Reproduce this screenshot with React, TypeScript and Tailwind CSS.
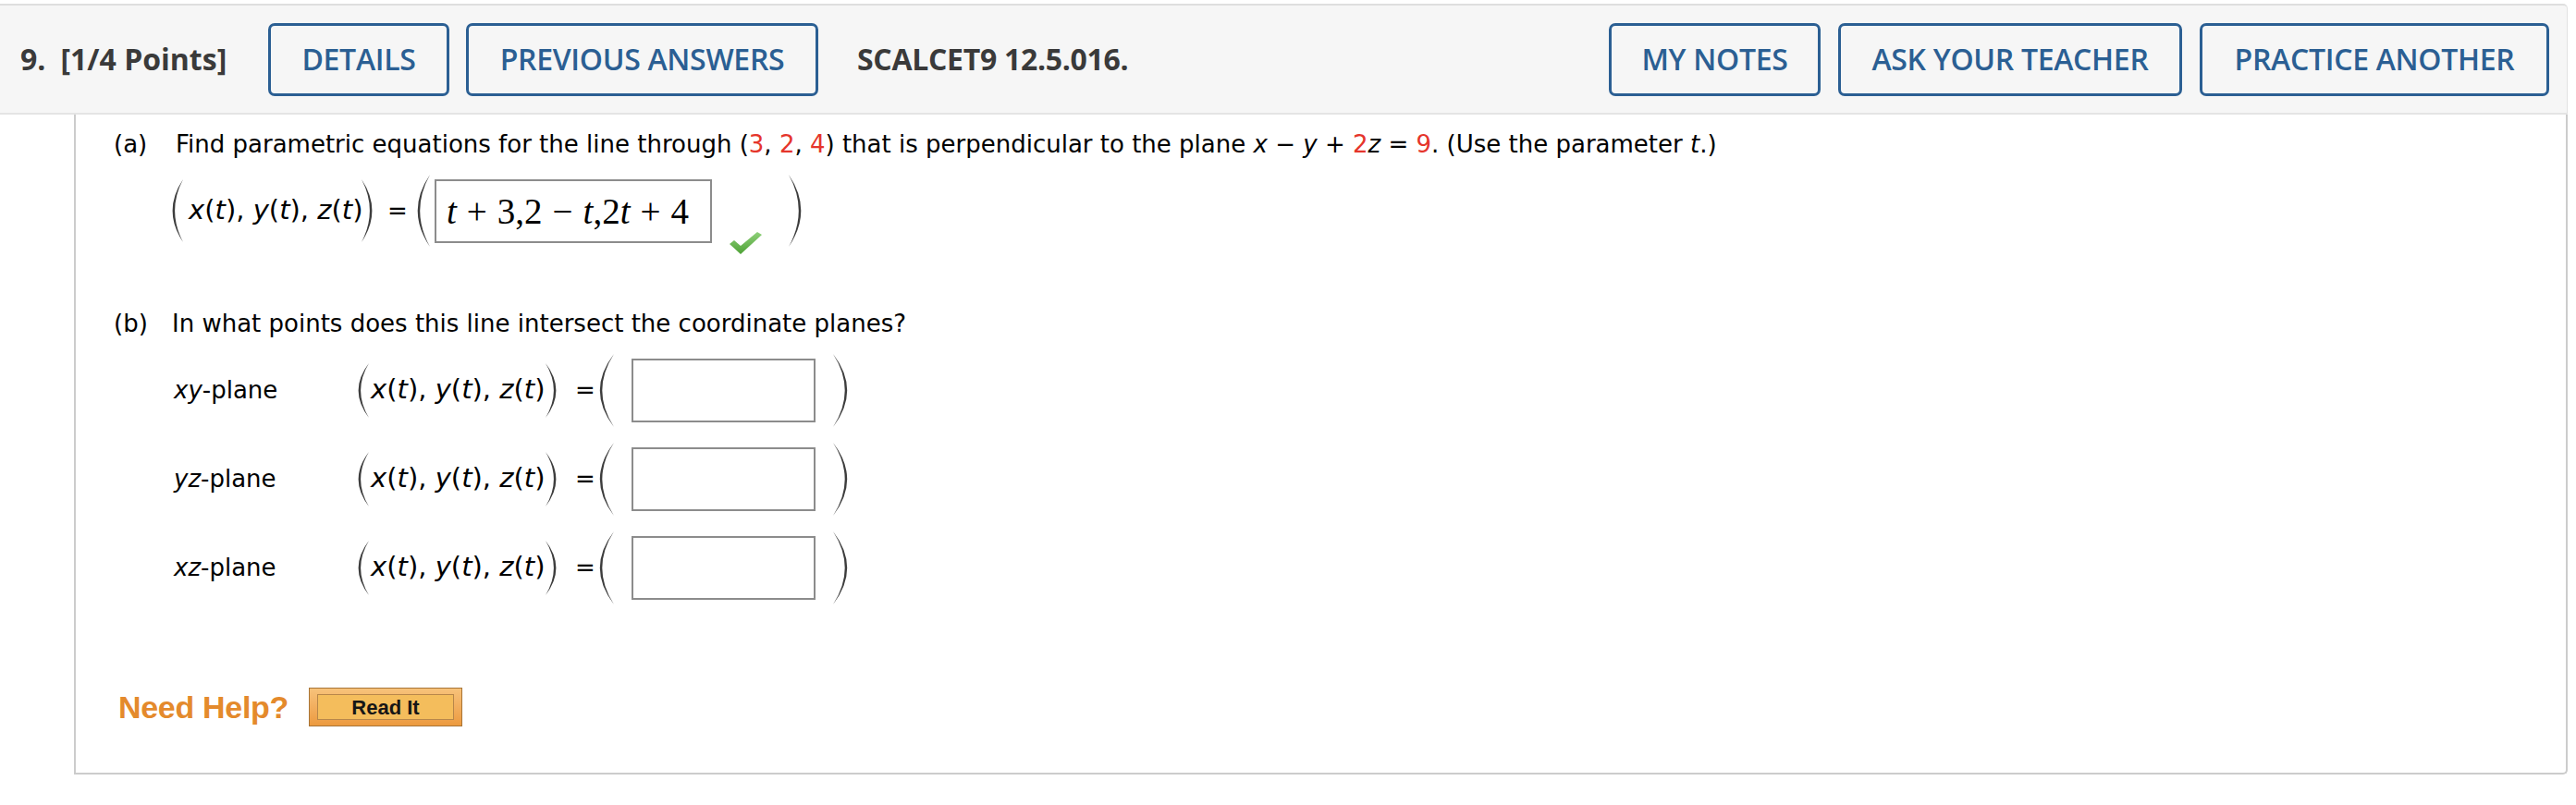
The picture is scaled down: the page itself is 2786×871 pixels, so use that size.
import type { ReactNode } from "react";

// stretchy math paren, tapered at the ends like MathJax's
function Paren({ side, w, h }: { side: "l" | "r"; w: number; h: number }) {
  const o = -w * 0.9;
  const i = o + 5;
  const left = `M${w} 0 Q${o} ${h / 2} ${w} ${h} Q${i} ${h / 2} ${w} 0 Z`;
  const right = `M0 0 Q${w - o} ${h / 2} 0 ${h} Q${w - i} ${h / 2} 0 0 Z`;
  return (
    <svg width={w} height={h} viewBox={`0 0 ${w} ${h}`} className="shrink-0">
      <path d={side === "l" ? left : right} fill="#3d3d3d" />
    </svg>
  );
}

function HeaderButton({ width, children }: { width: string; children: ReactNode }) {
  return (
    <button
      className={`flex h-[79px] shrink-0 items-center justify-center rounded-[7px] border-[3px] border-[#2b5f93] text-[32px] font-semibold tracking-[-0.3px] text-[#2b5f93] ${width}`}
    >
      {children}
    </button>
  );
}

function Xyz() {
  return (
    <span className="whitespace-nowrap text-[29px]">
      <i>x</i>(<i>t</i>), <i>y</i>(<i>t</i>), <i>z</i>(<i>t</i>)
    </span>
  );
}

function Red({ children }: { children: ReactNode }) {
  return <span className="text-[#e5352b]">{children}</span>;
}

function Check() {
  return (
    <svg width="36" height="24" viewBox="0 0 36 24" className="shrink-0">
      <defs>
        <linearGradient id="chk" x1="0" y1="0" x2="0" y2="1">
          <stop offset="0" stopColor="#8fd07a" />
          <stop offset="1" stopColor="#4ea236" />
        </linearGradient>
      </defs>
      <path d="M0 13 L5 9 L12 15 L30 0 L35 3 L12 24 Z" fill="url(#chk)" />
    </svg>
  );
}

function PlaneRow({ label }: { label: ReactNode }) {
  return (
    <div className="mt-[16px] flex h-[80px] items-center pl-[106px]">
      <span className="w-[199px] shrink-0">{label}</span>
      <Paren side="l" w={12} h={59} />
      <span className="ml-[2px] w-[189px] shrink-0">
        <Xyz />
      </span>
      <Paren side="r" w={12} h={59} />
      <span className="ml-[20px] w-[18px] shrink-0">=</span>
      <span className="ml-[8px]">
        <Paren side="l" w={16} h={79} />
      </span>
      <div className="ml-[19px] h-[69px] w-[199px] shrink-0 border-2 border-[#8c8c8c] bg-white" />
      <span className="ml-[19px]">
        <Paren side="r" w={16} h={79} />
      </span>
    </div>
  );
}

export default function App() {
  return (
    <div className="h-[871px] w-[2786px] bg-white pt-[4px] font-['DejaVu_Sans',sans-serif] text-black">
      <header className="flex h-[120px] w-[2777px] items-center rounded-tr-[5px] border-t-2 border-r border-b-2 border-t-[#dedede] border-r-[#e2e2e2] border-b-[#e4e4e4] bg-[#f6f6f6] pl-[22px] pr-[19px] font-['Open_Sans',sans-serif]">
        <span className="w-[268px] shrink-0 text-[32px] font-bold text-[#3a3a3a]">
          9.<span className="ml-[16px]">[1/4 Points]</span>
        </span>
        <HeaderButton width="w-[196px]">DETAILS</HeaderButton>
        <div className="ml-[18px]">
          <HeaderButton width="w-[381px]">PREVIOUS ANSWERS</HeaderButton>
        </div>
        <span className="ml-[42px] text-[32px] font-bold tracking-[-0.3px] text-[#3a3a3a]">
          SCALCET9 12.5.016.
        </span>
        <div className="ml-auto flex gap-[19px]">
          <HeaderButton width="w-[229px]">MY NOTES</HeaderButton>
          <HeaderButton width="w-[372px]">ASK YOUR TEACHER</HeaderButton>
          <HeaderButton width="w-[378px]">PRACTICE ANOTHER</HeaderButton>
        </div>
      </header>

      <section className="ml-[80px] h-[714px] w-[2697px] rounded-br-[5px] border-r-2 border-b-2 border-l-2 border-[#cccccc] pt-[16px] text-[26px]">
        {/* (a) */}
        <div className="flex h-[32px] items-center pl-[41px] leading-[32px]">
          <span className="w-[67px] shrink-0">(a)</span>
          <span className="whitespace-nowrap">
            Find parametric equations for the line through (<Red>3</Red>, <Red>2</Red>, <Red>4</Red>) that is
            perpendicular to the plane <i>x</i> − <i>y</i> + <Red>2</Red>
            <i>z</i> = <Red>9</Red>. (Use the parameter <i>t</i>.)
          </span>
        </div>

        <div className="mt-[16px] flex h-[80px] items-center pl-[104px]">
          <Paren side="l" w={12} h={68} />
          <span className="ml-[6px] w-[187px] shrink-0">
            <Xyz />
          </span>
          <Paren side="r" w={12} h={68} />
          <span className="ml-[16px] w-[18px] shrink-0">=</span>
          <span className="ml-[14px]">
            <Paren side="l" w={14} h={78} />
          </span>
          <div className="ml-[5px] flex h-[69px] w-[300px] shrink-0 items-center border-2 border-[#8c8c8c] bg-white pl-[11px] font-['Liberation_Serif',serif] text-[39px] leading-none whitespace-nowrap">
            <i>t</i>
            <span className="mx-[11px]">+</span>3,2
            <span className="mx-[11px]">−</span>
            <i>t</i>,2<i>t</i>
            <span className="mx-[11px]">+</span>4
          </div>
          <span className="mb-[-7px] ml-[19px] self-end">
            <Check />
          </span>
          <span className="ml-[28px]">
            <Paren side="r" w={14} h={78} />
          </span>
        </div>

        {/* (b) */}
        <div className="mt-[66px] flex h-[32px] items-center pl-[41px] leading-[32px]">
          <span className="w-[63px] shrink-0">(b)</span>
          <span>In what points does this line intersect the coordinate planes?</span>
        </div>

        <div className="mt-[4px]">
          <PlaneRow
            label={
              <>
                <i>xy</i>-plane
              </>
            }
          />
          <PlaneRow
            label={
              <>
                <i>yz</i>-plane
              </>
            }
          />
          <PlaneRow
            label={
              <>
                <i>xz</i>-plane
              </>
            }
          />
        </div>

        <div className="mt-[90px] flex h-[42px] items-center pl-[46px]">
          <span className="w-[206px] shrink-0 font-['Liberation_Sans',sans-serif] text-[34px] font-bold tracking-[-0.3px] text-[#e48a2c]">
            Need Help?
          </span>
          <button className="flex h-[42px] w-[166px] items-center justify-center border border-[#a87436] bg-gradient-to-b from-[#f7c27a] to-[#ec9a3e] px-[8px] py-[6px]">
            <span className="flex h-full w-full items-center justify-center border border-[#b8874a] bg-[#f4bd5c] font-['Liberation_Sans',sans-serif] text-[22px] font-bold text-[#161616]">
              Read It
            </span>
          </button>
        </div>
      </section>
    </div>
  );
}
